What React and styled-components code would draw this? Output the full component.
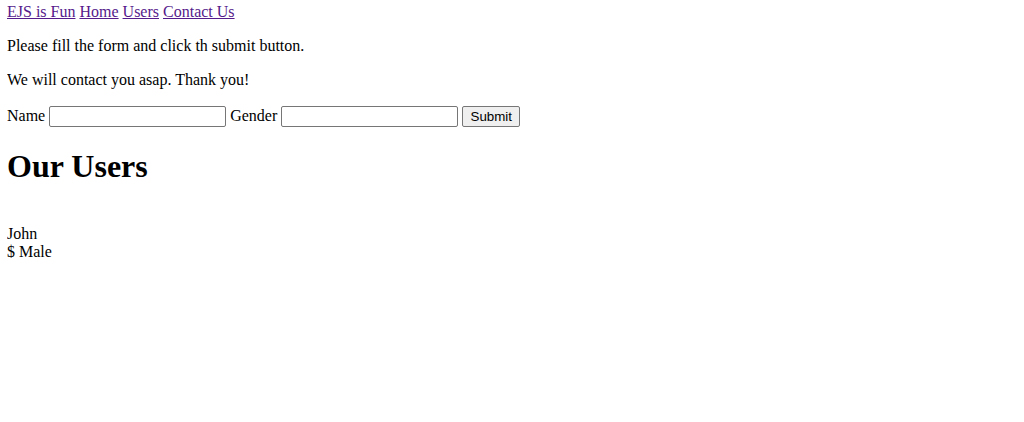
import React from "react";
import styled, { createGlobalStyle } from "styled-components";

const Global = createGlobalStyle`
  html, body { background: #fff; }
  body {
    margin: 3px 8px 8px 7px;
    font-family: "Liberation Serif", "Times New Roman", serif;
    font-size: 16px;
    line-height: normal;
    color: #000;
  }
`;

const Nav = styled.nav`
  display: block;
`;

const NavLink = styled.a`
  color: #551a8b;
  text-decoration: underline;
`;

const Para = styled.p`
  margin: 16px 0;
`;

const Form = styled.form`
  margin: 0;
  padding-top: 1px;
  display: block;
`;

const Label = styled.label``;

const TextInput = styled.input`
  box-sizing: border-box;
  width: 177px;
  height: 21px;
  padding: 1px 2px;
  border: 1px solid #767676;
  border-radius: 2px;
  font-family: "Liberation Sans", Arial, sans-serif;
  font-size: 13.33px;
  vertical-align: baseline;
  margin: 0;
`;

const SubmitButton = styled.button`
  box-sizing: border-box;
  width: 58px;
  height: 21px;
  padding: 1px 6px;
  border: 1px solid #767676;
  border-radius: 2px;
  background: #efefef;
  font-family: "Liberation Sans", Arial, sans-serif;
  font-size: 13.33px;
  color: #000;
  margin: 0;
`;

const Heading = styled.h1`
  font-size: 32px;
  font-weight: bold;
  margin: 21.44px 0;
`;

const UserList = styled.div`
  padding-top: 18px;
`;

const UserLine = styled.div``;

const users = [{ name: "John", gender: "Male" }];

export default function App() {
  return (
    <>
      <Global />
      <Nav>
        <NavLink href="#">EJS is Fun</NavLink>{" "}
        <NavLink href="#">Home</NavLink>{" "}
        <NavLink href="#">Users</NavLink>{" "}
        <NavLink href="#">Contact Us</NavLink>
      </Nav>
      <Para>Please fill the form and click th submit button.</Para>
      <Para>We will contact you asap. Thank you!</Para>
      <Form onSubmit={(e) => e.preventDefault()}>
        <Label>Name</Label> <TextInput type="text" name="name" />{" "}
        <Label>Gender</Label> <TextInput type="text" name="gender" />{" "}
        <SubmitButton type="submit">Submit</SubmitButton>
      </Form>
      <Heading>Our Users</Heading>
      <UserList>
        {users.map((u) => (
          <React.Fragment key={u.name}>
            <UserLine>{u.name}</UserLine>
            <UserLine>$ {u.gender}</UserLine>
          </React.Fragment>
        ))}
      </UserList>
    </>
  );
}
